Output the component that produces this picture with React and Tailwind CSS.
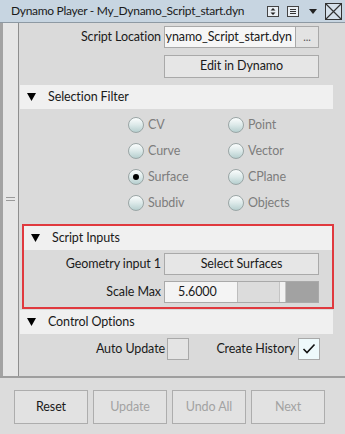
import React from 'react';

const FILTERS = [
  ['CV', 'Point'],
  ['Curve', 'Vector'],
  ['Surface', 'CPlane'],
  ['Subdiv', 'Objects'],
];

function Radio({ label, checked }) {
  return (
    <div className="flex items-center h-[26px] w-[100px]">
      <span className="w-[16px] h-[16px] rounded-full border border-[#9aa6a6] bg-linear-to-b from-[#fbfdfd] via-[#dce9e9] to-[#b6cfcf] flex items-center justify-center">
        {checked && <span className="w-[6px] h-[6px] rounded-full bg-black" />}
      </span>
      <span className="ml-[4px] text-[#7d7d7d]">{label}</span>
    </div>
  );
}

function Header({ title }) {
  return (
    <div className="h-[24px] bg-[#f0f0f0] flex items-center pl-[7px]">
      <svg width="9" height="8" viewBox="0 0 9 8">
        <path d="M0 0 H9 L4.5 8 Z" fill="#000" />
      </svg>
      <span className="ml-[12px]">{title}</span>
    </div>
  );
}

function Row({ label, children, className = '' }) {
  return (
    <div className={`flex items-center ${className}`}>
      <span className="w-[144px] text-right pr-[3px] whitespace-nowrap">{label}</span>
      {children}
    </div>
  );
}

export default function App() {
  return (
    <div
      className="w-[345px] h-[434px] bg-[#dadada] flex flex-col text-[12.5px] tracking-[-0.1px] text-[#1a1a1a] overflow-hidden"
      style={{ fontFamily: 'Lato, "Liberation Sans", sans-serif' }}
    >
      {/* Title bar */}
      <div className="h-[23px] shrink-0 bg-[#c7d5e1] border-b border-[#8d99a3] flex items-center pl-[11px] pr-[3px]">
        <span className="flex-1 min-w-0 text-[12px] tracking-[-0.3px] whitespace-nowrap">Dynamo Player - My_Dynamo_Script_start.dyn</span>
        <span className="shrink-0 w-[12px] h-[11px] border border-[#444] bg-[#e8eef3] flex items-center justify-center mr-[8px]">
          <svg width="6" height="7" viewBox="0 0 6 7">
            <path d="M3 0 L5.5 2.5 H0.5 Z M3 7 L5.5 4.5 H0.5 Z" fill="#222" />
          </svg>
        </span>
        <span className="shrink-0 w-[12px] h-[11px] border border-[#444] bg-[#e8eef3] flex flex-col justify-center gap-[1px] px-[2px] mr-[10px]">
          <span className="h-px bg-[#333]" />
          <span className="h-px bg-[#333]" />
          <span className="h-px bg-[#333]" />
        </span>
        <svg width="8" height="5" viewBox="0 0 8 5" className="shrink-0 mr-[8px]">
          <path d="M0 0 H8 L4 5 Z" fill="#222" />
        </svg>
        <svg width="17" height="17" viewBox="0 0 17 17" className="shrink-0">
          <rect x="0.5" y="0.5" width="16" height="16" fill="#d5e0ea" stroke="#333" />
          <path d="M1 1 L16 16 M16 1 L1 16" stroke="#333" strokeWidth="1.2" />
        </svg>
      </div>

      {/* Body */}
      <div className="h-[353px] shrink-0 flex">
        <div className="w-[19px] shrink-0 border-l-[3px] border-[#a3a3a3] flex">
          <div className="flex-1 bg-[#e6e6e6] border-r border-[#8e8e8e] flex flex-col items-center pt-[174px]">
            <span className="w-[9px] h-px bg-[#9a9a9a]" />
            <span className="w-[9px] h-px bg-[#9a9a9a] mt-[2px]" />
          </div>
        </div>

        <div className="flex-1 pl-[1px] pr-[12px] flex flex-col">
          <Row label="Script Location" className="mt-[3px]">
            <div className="w-[132px] h-[22px] bg-[#f6f6f6] border border-[#a9a9a9] flex items-center overflow-hidden justify-end pr-[3px] whitespace-nowrap">
              ynamo_Script_start.dyn
            </div>
            <div className="w-[23px] h-[22px] bg-[#e3e3e3] border border-l-0 border-[#a9a9a9] flex items-center justify-center text-[#555] text-[11px]">
              ...
            </div>
          </Row>
          <Row label="" className="mt-[7px]">
            <div className="w-[155px] h-[23px] bg-[#e6e6e6] border border-[#a9a9a9] flex items-center justify-center">
              Edit in Dynamo
            </div>
          </Row>

          <div className="mt-[7px]">
            <Header title="Selection Filter" />
          </div>
          <div className="pl-[108px] pt-[3px] flex flex-col">
            {FILTERS.map(([a, b]) => (
              <div key={a} className="flex">
                <Radio label={a} checked={a === 'Surface'} />
                <Radio label={b} />
              </div>
            ))}
          </div>

          <div className="mt-[8px] ml-[2px] mr-[-1px] border-2 border-[#e0393e] h-[85px]">
            <Header title="Script Inputs" />
            <Row label="Geometry input 1" className="mt-[3px] -ml-[4px]">
              <div className="w-[155px] h-[22px] bg-[#e6e6e6] border border-[#a9a9a9] flex items-center justify-center">
                Select Surfaces
              </div>
            </Row>
            <Row label="Scale Max" className="mt-[6px] -ml-[4px]">
              <div className="w-[155px] h-[22px] border border-[#a9a9a9] flex">
                <div className="w-[73px] bg-[#f4f4f4] border-r border-[#bdbdbd] flex items-center pl-[13px]">
                  5.6000
                </div>
                <div className="w-[41px] bg-[#dcdcdc]" />
                <div className="w-[7px] bg-[#f2f2f2] border-x border-[#c4c4c4]" />
                <div className="flex-1 bg-[#a2a2a2]" />
              </div>
            </Row>
          </div>

          <div className="mt-[1px]">
            <Header title="Control Options" />
          </div>
          <div className="flex items-center mt-[4px]">
            <span className="w-[147px] text-right pr-[2px]">Auto Update</span>
            <span className="w-[22px] h-[22px] border border-[#a9a9a9] bg-[#e4e4e4]" />
            <span className="w-[109px] text-right pr-[3px]">Create History</span>
            <span className="w-[22px] h-[22px] border border-[#a9a9a9] bg-[#eef9fb] flex items-center justify-center">
              <svg width="14" height="12" viewBox="0 0 14 12">
                <path d="M1.5 6 L5 9.5 L12.5 1.5" fill="none" stroke="#111" strokeWidth="1.6" />
              </svg>
            </span>
          </div>
        </div>
      </div>

      {/* Footer */}
      <div className="flex-1 border-t-2 border-[#9e9e9e] bg-[#dcdcdc] flex gap-[5px] pl-[14px] pt-[12px]">
        {['Reset', 'Update', 'Undo All', 'Next'].map((b) => (
          <div
            key={b}
            className={`w-[74px] h-[34px] bg-[#e2e2e2] border border-[#adadad] flex items-center justify-center ${b === 'Reset' ? 'text-[#1a1a1a]' : 'text-[#a3a3a3]'}`}
          >
            {b}
          </div>
        ))}
      </div>
    </div>
  );
}
